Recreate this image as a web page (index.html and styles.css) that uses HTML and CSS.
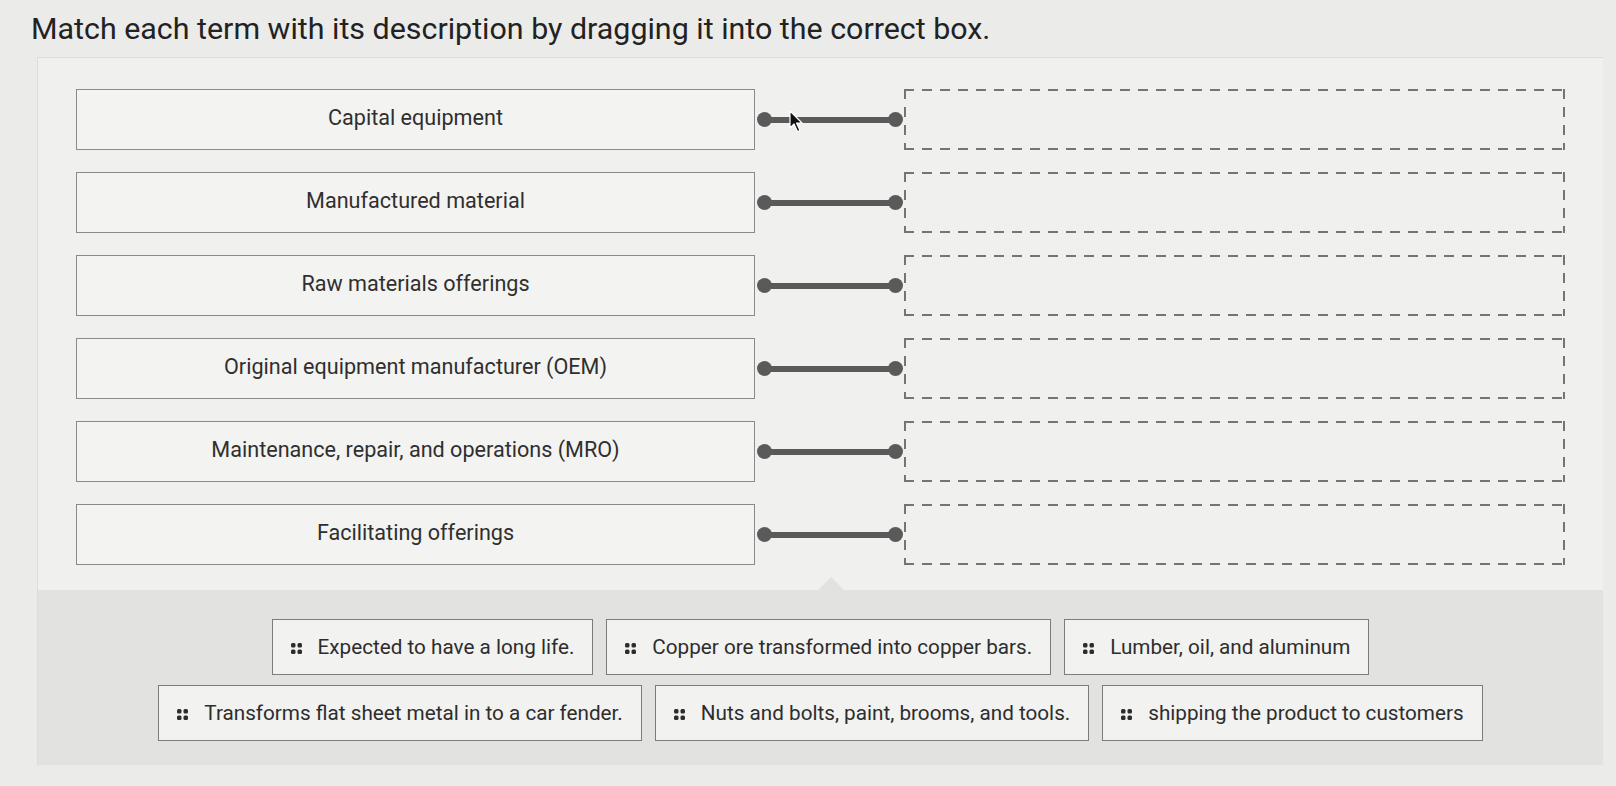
FILE: index.html
```html
<!DOCTYPE html>
<html lang="en">
<head>
    <meta charset="UTF-8">
    <meta name="viewport" content="width=device-width, initial-scale=1.0">
    <title>Matching</title>
    <link rel="stylesheet" href="styles.css">
</head>
<body>
    <h1 class="prompt">Match each term with its description by dragging it into the correct box.</h1>

    <div class="activity">
        <!-- Terms on the left, empty drop zones on the right -->
        <div class="pairs">
            <div class="term">Capital equipment</div>
            <div class="link"><span class="dot"></span><span class="bar"></span><span class="dot"></span></div>
            <div class="drop"></div>

            <div class="term">Manufactured material</div>
            <div class="link"><span class="dot"></span><span class="bar"></span><span class="dot"></span></div>
            <div class="drop"></div>

            <div class="term">Raw materials offerings</div>
            <div class="link"><span class="dot"></span><span class="bar"></span><span class="dot"></span></div>
            <div class="drop"></div>

            <div class="term">Original equipment manufacturer (OEM)</div>
            <div class="link"><span class="dot"></span><span class="bar"></span><span class="dot"></span></div>
            <div class="drop"></div>

            <div class="term">Maintenance, repair, and operations (MRO)</div>
            <div class="link"><span class="dot"></span><span class="bar"></span><span class="dot"></span></div>
            <div class="drop"></div>

            <div class="term">Facilitating offerings</div>
            <div class="link"><span class="dot"></span><span class="bar"></span><span class="dot"></span></div>
            <div class="drop"></div>
        </div>

        <!-- Answer bank -->
        <div class="bank">
            <div class="chip"><svg class="grip" width="11" height="11" viewBox="0 0 11 11"><rect x="0" y="0" width="4.5" height="4.5" rx="1.5"/><rect x="6.5" y="0" width="4.5" height="4.5" rx="1.5"/><rect x="0" y="6.5" width="4.5" height="4.5" rx="1.5"/><rect x="6.5" y="6.5" width="4.5" height="4.5" rx="1.5"/></svg>Expected to have a long life.</div>
            <div class="chip"><svg class="grip" width="11" height="11" viewBox="0 0 11 11"><rect x="0" y="0" width="4.5" height="4.5" rx="1.5"/><rect x="6.5" y="0" width="4.5" height="4.5" rx="1.5"/><rect x="0" y="6.5" width="4.5" height="4.5" rx="1.5"/><rect x="6.5" y="6.5" width="4.5" height="4.5" rx="1.5"/></svg>Copper ore transformed into copper bars.</div>
            <div class="chip"><svg class="grip" width="11" height="11" viewBox="0 0 11 11"><rect x="0" y="0" width="4.5" height="4.5" rx="1.5"/><rect x="6.5" y="0" width="4.5" height="4.5" rx="1.5"/><rect x="0" y="6.5" width="4.5" height="4.5" rx="1.5"/><rect x="6.5" y="6.5" width="4.5" height="4.5" rx="1.5"/></svg>Lumber, oil, and aluminum</div>
            <div class="chip"><svg class="grip" width="11" height="11" viewBox="0 0 11 11"><rect x="0" y="0" width="4.5" height="4.5" rx="1.5"/><rect x="6.5" y="0" width="4.5" height="4.5" rx="1.5"/><rect x="0" y="6.5" width="4.5" height="4.5" rx="1.5"/><rect x="6.5" y="6.5" width="4.5" height="4.5" rx="1.5"/></svg>Transforms flat sheet metal in to a car fender.</div>
            <div class="chip"><svg class="grip" width="11" height="11" viewBox="0 0 11 11"><rect x="0" y="0" width="4.5" height="4.5" rx="1.5"/><rect x="6.5" y="0" width="4.5" height="4.5" rx="1.5"/><rect x="0" y="6.5" width="4.5" height="4.5" rx="1.5"/><rect x="6.5" y="6.5" width="4.5" height="4.5" rx="1.5"/></svg>Nuts and bolts, paint, brooms, and tools.</div>
            <div class="chip"><svg class="grip" width="11" height="11" viewBox="0 0 11 11"><rect x="0" y="0" width="4.5" height="4.5" rx="1.5"/><rect x="6.5" y="0" width="4.5" height="4.5" rx="1.5"/><rect x="0" y="6.5" width="4.5" height="4.5" rx="1.5"/><rect x="6.5" y="6.5" width="4.5" height="4.5" rx="1.5"/></svg>shipping the product to customers</div>
        </div>
    </div>

    <!-- mouse pointer -->
    <svg class="pointer" width="16" height="24" viewBox="0 0 16 24">
        <path d="M1 1 L1 18 L5 14 L8.5 21.5 L11 20.5 L7.5 13 L13 13 Z" fill="#111" stroke="#fff" stroke-width="1.2" stroke-linejoin="round"/>
    </svg>
</body>
</html>
```

FILE: styles.css
```css
/* Reset */
* {
    margin: 0;
    padding: 0;
    box-sizing: border-box;
    font-family: Roboto, "Liberation Sans", Arial, sans-serif;
}

body {
    background: #ebebe9;
    color: #333;
    position: relative;
    min-height: 786px;
}

.prompt {
    font-size: 30.4px;
    font-weight: 400;
    color: #222;
    padding: 11px 0 0 31px;
    line-height: 36px;
    height: 57px;
}

.activity {
    margin-left: 37px;
    width: 1566px;
    background: #f0f0ee;
    border-top: 1px solid #dcdcda;
    border-left: 1px solid #dcdcda;
}

/* Terms / drop zones */
.pairs {
    display: grid;
    grid-template-columns: 679px 149px 1fr;
    grid-auto-rows: 61px;
    row-gap: 22px;
    padding: 31px 38px 25px 38px;
}

.term {
    border: 1px solid #8a8a8a;
    background: #f3f3f1;
    display: flex;
    align-items: center;
    justify-content: center;
    font-size: 21.6px;
    color: #2f2f2f;
    padding-bottom: 4px;
}

.link {
    display: flex;
    align-items: center;
    padding: 0 1px 0 2px;
}

.link .dot {
    width: 15px;
    height: 15px;
    border-radius: 50%;
    background: #5a5a5a;
    flex-shrink: 0;
}

.link .bar {
    flex: 1;
    height: 6px;
    margin: 0 -2px;
    background: #5a5a5a;
}

.drop {
    background:
        linear-gradient(90deg, #747474 10px, transparent 0) top left / 18px 2px repeat-x,
        linear-gradient(90deg, #747474 10px, transparent 0) bottom left / 18px 2px repeat-x,
        linear-gradient(#747474 10px, transparent 0) top left / 2px 18px repeat-y,
        linear-gradient(#747474 10px, transparent 0) top right / 2px 18px repeat-y;
}

/* Answer bank */
.bank {
    position: relative;
    background: #e2e2e0;
    display: flex;
    flex-wrap: wrap;
    justify-content: center;
    gap: 10px 13px;
    padding: 29px 40px 24px;
}

.bank::before {
    content: "";
    position: absolute;
    top: -13px;
    left: 780px;
    border-left: 13px solid transparent;
    border-right: 13px solid transparent;
    border-bottom: 13px solid #e2e2e0;
}

.chip {
    height: 56px;
    display: flex;
    align-items: center;
    gap: 16px;
    padding: 0 18px;
    border: 1px solid #7c7c7c;
    background: #f2f2f0;
    font-size: 20.7px;
    color: #2d2d2d;
}

.grip {
    fill: #2d2d2d;
    flex-shrink: 0;
    margin-top: 3px;
}

.pointer {
    position: absolute;
    left: 789px;
    top: 110px;
}
```
